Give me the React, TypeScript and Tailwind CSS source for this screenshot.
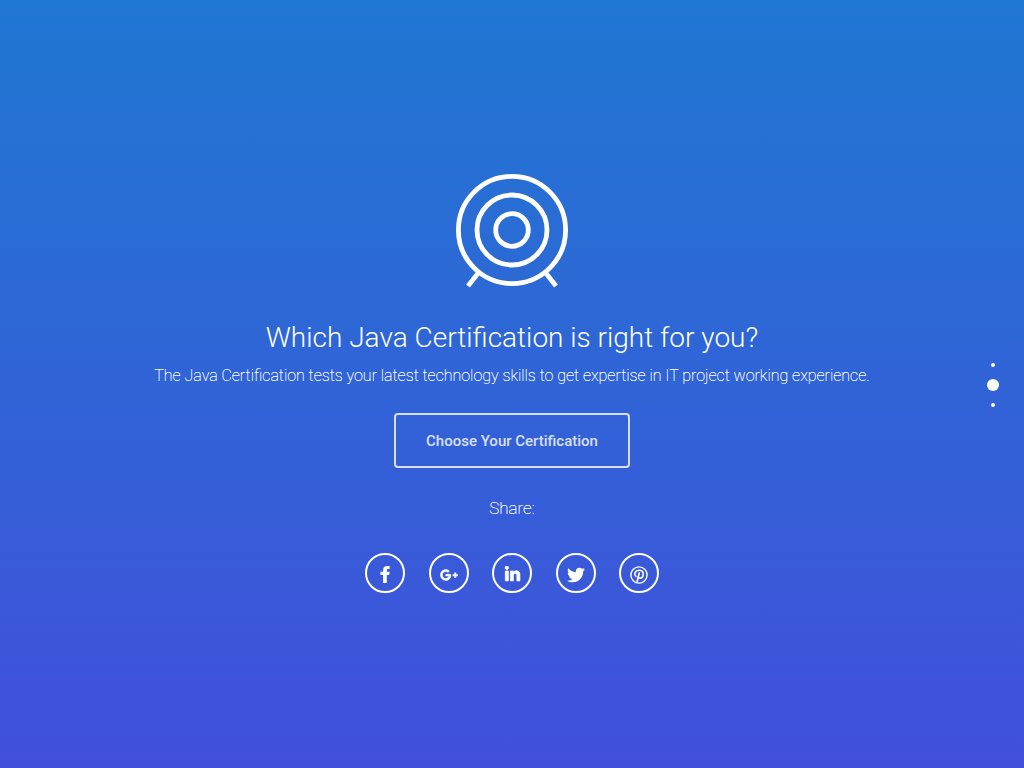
import type { ReactNode } from "react";
import { FaLinkedinIn, FaTwitter, FaGooglePlusG } from "react-icons/fa";

function TargetIcon() {
  return (
    <svg viewBox="0 0 112 114" className="h-[114px] w-[112px]" fill="none" stroke="currentColor" strokeWidth="4.8" aria-hidden="true">
      <circle cx="56" cy="56" r="53.6" />
      <circle cx="56" cy="56" r="35" />
      <circle cx="56" cy="56" r="16.3" />
      <path d="M23 98 12 112M89 98l11 14" />
    </svg>
  );
}

function FacebookIcon() {
  return (
    <svg viewBox="0 0 10 17" className="h-[17px] w-2.5" fill="currentColor" aria-hidden="true">
      <path d="M9.6 0v3H8C7 3 6.8 3.5 6.8 4.2V5.8h2.8l-.4 3.1H6.8V17H3.1V8.9H.4V5.8h2.7V3.9C3.1 1.4 4.7 0 7 0z" />
    </svg>
  );
}

function PinterestIcon() {
  return (
    <svg viewBox="0 0 18 18" className="size-[18px]" fill="none" stroke="currentColor" strokeLinecap="round" aria-hidden="true">
      <circle cx="9" cy="9" r="8.1" strokeWidth="1.4" />
      <path d="M5.9 10.4C4.9 9.7 4.6 8.5 4.9 7.3 5.4 5.3 7.2 4.2 9.3 4.2c2.2 0 3.9 1.5 3.9 3.7 0 2.4-1.4 4.2-3.2 4.2-1 0-1.7-.5-1.9-1.2" strokeWidth="1.6" />
      <path d="M9.2 7.1 7.2 15.4" strokeWidth="1.7" />
    </svg>
  );
}

const shares: { label: string; icon: ReactNode }[] = [
  { label: "Share on Facebook", icon: <FacebookIcon /> },
  { label: "Share on Google Plus", icon: <FaGooglePlusG className="size-[18px]" stroke="currentColor" strokeWidth="16" /> },
  { label: "Share on LinkedIn", icon: <FaLinkedinIn className="size-[17px]" stroke="currentColor" strokeWidth="20" /> },
  { label: "Share on Twitter", icon: <FaTwitter className="size-[18px]" /> },
  { label: "Share on Pinterest", icon: <PinterestIcon /> },
];

export default function App() {
  return (
    <main className="relative flex min-h-screen flex-col items-center justify-center bg-linear-to-b/srgb from-[#1f78d2] to-[#424fdb] px-4 pb-0.5 text-center font-['Roboto',sans-serif] text-white">
      <TargetIcon />
      <h1 className="mt-[30px] text-[28px] leading-10 font-light">Which Java Certification is right for you?</h1>
      <p className="mt-1 text-base leading-7 font-thin [text-shadow:0_0_0_#fff]">
        The Java Certification tests your latest technology skills to get expertise in IT project working experience.
      </p>
      <button type="button" className="mt-[23px] h-[55px] rounded border-2 border-white px-[30px] pt-0.5 text-[15px] font-medium opacity-80">
        Choose Your Certification
      </button>
      <p className="mt-7 text-[17px] leading-6 font-thin [text-shadow:0_0_0_#fff]">Share:</p>
      <ul className="mt-[33px] flex w-[294px] justify-between">
        {shares.map((s) => (
          <li key={s.label}>
            <a href="#share" aria-label={s.label} className="flex size-10 items-center justify-center rounded-full border-2 border-white pt-1">
              {s.icon}
            </a>
          </li>
        ))}
      </ul>
      <nav aria-label="Sections" className="absolute top-1/2 right-[25px] flex -translate-y-1/2 flex-col items-center gap-3 pt-0.5">
        <a href="#previous" aria-label="Previous section" className="size-1 rounded-full bg-white" />
        <a href="#current" aria-label="Current section" className="size-3 rounded-full bg-white" />
        <a href="#next" aria-label="Next section" className="size-1 rounded-full bg-white" />
      </nav>
    </main>
  );
}
